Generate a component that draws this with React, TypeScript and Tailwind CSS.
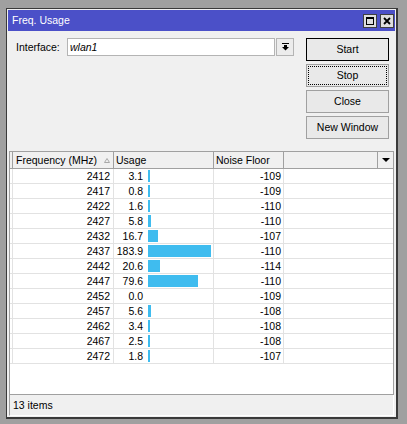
import React from "react";

const rows: [number, string, number, number][] = [
  [2412, "3.1", 2, -109],
  [2417, "0.8", 2, -109],
  [2422, "1.6", 2, -110],
  [2427, "5.8", 3, -110],
  [2432, "16.7", 10, -107],
  [2437, "183.9", 63, -110],
  [2442, "20.6", 12, -114],
  [2447, "79.6", 50, -110],
  [2452, "0.0", 0, -109],
  [2457, "5.6", 3, -108],
  [2462, "3.4", 2, -108],
  [2467, "2.5", 2, -108],
  [2472, "1.8", 2, -107],
];

function Btn({ label, variant }: { label: string; variant?: "default" | "focus" }) {
  if (variant === "default") {
    return (
      <div className="h-[23px] w-[83px] border border-black bg-[#e9e9e9] flex items-center justify-center">
        {label}
      </div>
    );
  }
  if (variant === "focus") {
    return (
      <div className="h-[23px] w-[83px] border border-[#a0a0a0] bg-[#e9e9e9] p-px">
        <div className="h-full w-full border border-dotted border-black flex items-center justify-center">
          {label}
        </div>
      </div>
    );
  }
  return (
    <div className="h-[23px] w-[83px] border border-[#a0a0a0] bg-[#e9e9e9] flex items-center justify-center">
      {label}
    </div>
  );
}

export default function App() {
  return (
    <div className="w-[407px] h-[424px] bg-[#a0a0a0] pt-[8px] pl-[6px] font-['Liberation_Sans',Arial,sans-serif] text-[10.5px] leading-none text-black overflow-hidden">
      <div className="w-[392px] h-[411px] border-t border-l border-r-2 border-b-2 border-[#3a3a3a] bg-[#f0f0f0] p-px flex flex-col">
        {/* Title bar */}
        <div className="h-[21px] bg-[#4b50c8] flex items-center pl-[4px] pr-[1px] text-white text-[10.5px]">
          <span>Freq. Usage</span>
          <div className="ml-auto flex gap-[3px]">
            <div className="w-[14px] h-[14px] bg-[#dedede] border border-[#404040] flex items-center justify-center">
              <svg width="8" height="8" viewBox="0 0 8 8">
                <rect x="0.5" y="0.5" width="7" height="7" fill="none" stroke="#000" strokeWidth="1" />
                <rect x="0" y="0" width="8" height="2" fill="#000" />
              </svg>
            </div>
            <div className="w-[14px] h-[14px] bg-[#dedede] border border-[#404040] flex items-center justify-center">
              <svg width="8" height="8" viewBox="0 0 8 8">
                <path d="M1 1 L7 7 M7 1 L1 7" stroke="#000" strokeWidth="1.8" />
              </svg>
            </div>
          </div>
        </div>

        {/* Top section */}
        <div className="flex pt-[7px]">
          <div className="flex items-start pl-[8px]">
            <div className="w-[51px] h-[18px] flex items-center">Interface:</div>
            <div className="w-[208px] h-[18px] border border-[#b4b4b4] bg-white flex items-center pl-[2px] italic">
              wlan1
            </div>
            <div className="ml-px w-[18px] h-[18px] border border-[#b4b4b4] bg-[#ececec] flex items-center justify-center">
              <svg width="7" height="8" viewBox="0 0 7 8">
                <rect x="0" y="0" width="7" height="1" fill="#000" />
                <rect x="2" y="2" width="3" height="2" fill="#000" />
                <polygon points="0,4 7,4 3.5,7.5" fill="#000" />
              </svg>
            </div>
          </div>
          <div className="ml-auto pr-[6px] flex flex-col gap-[3px]">
            <Btn label="Start" variant="default" />
            <Btn label="Stop" variant="focus" />
            <Btn label="Close" />
            <Btn label="New Window" />
          </div>
        </div>

        {/* Table */}
        <div className="mt-[12px] ml-px w-[385px] h-[244px] border border-[#a0a0a0] bg-white flex flex-col">
          <div className="grid grid-cols-[3px_101px_100px_70px_94px_15px] h-[17px] border-b border-[#a0a0a0] bg-[#f0f0f0]">
            <div className="border-r border-[#a0a0a0]" />
            <div className="border-r border-[#a0a0a0] flex items-center pl-[3px] pr-[3px]">
              <span>Frequency (MHz)</span>
              <svg className="ml-auto" width="6" height="5" viewBox="0 0 6 5">
                <polygon points="3,0.5 5.5,4.5 0.5,4.5" fill="none" stroke="#a8a8a8" strokeWidth="1" />
              </svg>
            </div>
            <div className="border-r border-[#a0a0a0] flex items-center pl-[2px]">Usage</div>
            <div className="border-r border-[#a0a0a0] flex items-center pl-[2px]">Noise Floor</div>
            <div className="border-r border-[#a0a0a0]" />
            <div className="flex items-center justify-center">
              <svg width="8" height="4" viewBox="0 0 8 4">
                <polygon points="0,0 8,0 4,4" fill="#000" />
              </svg>
            </div>
          </div>
          {rows.map(([f, u, w, n]) => (
            <div
              key={f}
              className="grid grid-cols-[3px_101px_100px_70px_1fr] h-[15px] border-b border-[#e2e2e2]"
            >
              <div className="border-r border-[#e2e2e2]" />
              <div className="border-r border-[#e2e2e2] flex items-center justify-end pr-[3px]">{f}</div>
              <div className="border-r border-[#e2e2e2] flex items-center">
                <span className="w-[29px] text-right">{u}</span>
                {w > 0 && <div className="ml-[5px] h-[12px] bg-[#3fbcef]" style={{ width: `${w}px` }} />}
              </div>
              <div className="border-r border-[#e2e2e2] flex items-center justify-end pr-[2px]">{n}</div>
              <div />
            </div>
          ))}
        </div>

        {/* Status bar */}
        <div className="ml-px w-[385px] h-[21px] border-l border-[#a0a0a0] border-r border-r-white border-b border-b-white flex items-center pl-[3px]">
          13 items
        </div>
      </div>
    </div>
  );
}
